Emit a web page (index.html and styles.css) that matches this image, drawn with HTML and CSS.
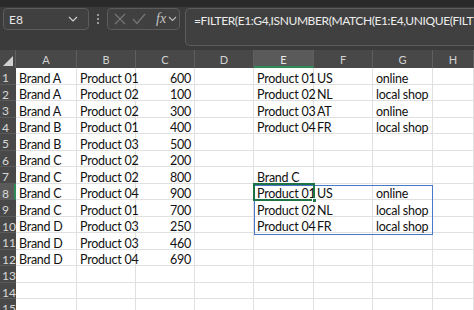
FILE: index.html
```html
<!DOCTYPE html>
<html>
<head>
<meta charset="utf-8">
<link rel="stylesheet" href="styles.css">
</head>
<body>
<div class="app">
  <div class="topstrip"></div>
  <div class="toolbar">
    <div class="namebox">
      <span class="nb-text">E8</span>
      <svg class="chev" width="10" height="6" viewBox="0 0 10 6"><path d="M1 1 L5 5 L9 1" fill="none" stroke="#cfcfcf" stroke-width="1.2"/></svg>
    </div>
    <div class="dots"><i></i><i></i><i></i></div>
    <div class="fxbox">
      <svg class="ico" width="12" height="12" viewBox="0 0 12 12"><path d="M1 1 L11 11 M11 1 L1 11" stroke="#767676" stroke-width="1.2"/></svg>
      <svg class="ico" width="14" height="12" viewBox="0 0 14 12"><path d="M1 6 L5 10.5 L13 1" fill="none" stroke="#767676" stroke-width="1.2"/></svg>
      <span class="fx">fx</span>
      <svg class="chev small" width="9" height="6" viewBox="0 0 9 6"><path d="M1 1 L4.5 4.5 L8 1" fill="none" stroke="#bdbdbd" stroke-width="1.1"/></svg>
    </div>
    <div class="formula">=FILTER(E1:G4,ISNUMBER(MATCH(E1:E4,UNIQUE(FILTER(A1:A12,B1:B12=E1:E4)),0)))</div>
  </div>
  <div class="sheet">
    <div class="corner"><span class="tri"></span></div>
    <div class="ch">A</div><div class="ch">B</div><div class="ch">C</div><div class="ch">D</div><div class="ch sel">E</div><div class="ch">F</div><div class="ch">G</div><div class="ch">H</div>

    <div class="rh">1</div><div class="c">Brand A</div><div class="c">Product 01</div><div class="c n">600</div><div class="c"></div><div class="c">Product 01</div><div class="c">US</div><div class="c">online</div><div class="c"></div>
    <div class="rh">2</div><div class="c">Brand A</div><div class="c">Product 02</div><div class="c n">100</div><div class="c"></div><div class="c">Product 02</div><div class="c">NL</div><div class="c">local shop</div><div class="c"></div>
    <div class="rh">3</div><div class="c">Brand A</div><div class="c">Product 02</div><div class="c n">300</div><div class="c"></div><div class="c">Product 03</div><div class="c">AT</div><div class="c">online</div><div class="c"></div>
    <div class="rh">4</div><div class="c">Brand B</div><div class="c">Product 01</div><div class="c n">400</div><div class="c"></div><div class="c">Product 04</div><div class="c">FR</div><div class="c">local shop</div><div class="c"></div>
    <div class="rh">5</div><div class="c">Brand B</div><div class="c">Product 03</div><div class="c n">500</div><div class="c"></div><div class="c"></div><div class="c"></div><div class="c"></div><div class="c"></div>
    <div class="rh">6</div><div class="c">Brand C</div><div class="c">Product 02</div><div class="c n">200</div><div class="c"></div><div class="c"></div><div class="c"></div><div class="c"></div><div class="c"></div>
    <div class="rh">7</div><div class="c">Brand C</div><div class="c">Product 02</div><div class="c n">800</div><div class="c"></div><div class="c">Brand C</div><div class="c"></div><div class="c"></div><div class="c"></div>
    <div class="rh sel">8</div><div class="c">Brand C</div><div class="c">Product 04</div><div class="c n">900</div><div class="c"></div><div class="c active">Product 01<span class="handle"></span></div><div class="c">US</div><div class="c">online</div><div class="c"></div>
    <div class="rh">9</div><div class="c">Brand C</div><div class="c">Product 01</div><div class="c n">700</div><div class="c"></div><div class="c">Product 02</div><div class="c">NL</div><div class="c">local shop</div><div class="c"></div>
    <div class="rh">10</div><div class="c">Brand D</div><div class="c">Product 03</div><div class="c n">250</div><div class="c"></div><div class="c">Product 04</div><div class="c">FR</div><div class="c">local shop</div><div class="c"></div>
    <div class="rh">11</div><div class="c">Brand D</div><div class="c">Product 03</div><div class="c n">460</div><div class="c"></div><div class="c"></div><div class="c"></div><div class="c"></div><div class="c"></div>
    <div class="rh">12</div><div class="c">Brand D</div><div class="c">Product 04</div><div class="c n">690</div><div class="c"></div><div class="c"></div><div class="c"></div><div class="c"></div><div class="c"></div>
    <div class="rh">13</div><div class="c"></div><div class="c"></div><div class="c"></div><div class="c"></div><div class="c"></div><div class="c"></div><div class="c"></div><div class="c"></div>
    <div class="rh">14</div><div class="c"></div><div class="c"></div><div class="c"></div><div class="c"></div><div class="c"></div><div class="c"></div><div class="c"></div><div class="c"></div>
    <div class="rh">15</div><div class="c"></div><div class="c"></div><div class="c"></div><div class="c"></div><div class="c"></div><div class="c"></div><div class="c"></div><div class="c"></div>

    <div class="spill"></div>
  </div>
</div>
</body>
</html>
```

FILE: styles.css
```css
* { box-sizing: border-box; }
html, body { margin: 0; padding: 0; }
body {
  width: 474px;
  height: 310px;
  overflow: hidden;
  background: #3a3a3a;
  font-family: Lato, "Liberation Sans", sans-serif;
}
.app { width: 474px; height: 310px; overflow: hidden; }
.topstrip { height: 7px; background: #2a2a2a; }
.toolbar {
  height: 43px;
  display: flex;
  align-items: flex-start;
  padding-top: 1px;
  background: #3b3b3b;
}
.namebox {
  margin-left: 3px;
  width: 86px;
  height: 22px;
  border: 1px solid #5c5c5c;
  border-radius: 4px;
  background: #404040;
  display: flex;
  align-items: center;
  justify-content: space-between;
  padding: 0 10px 0 5px;
}
.nb-text { color: #e8e8e8; font-size: 12px; }
.dots {
  width: 18px;
  height: 22px;
  display: flex;
  flex-direction: column;
  align-items: center;
  justify-content: center;
  gap: 2px;
}
.dots i { display: block; width: 2px; height: 2px; background: #bdbdbd; border-radius: 1px; }
.fxbox {
  width: 73px;
  height: 22px;
  border: 1px solid #5c5c5c;
  border-radius: 4px;
  background: #404040;
  display: flex;
  align-items: center;
  padding-left: 6px;
  gap: 6px;
}
.fx {
  font-family: "Liberation Serif", serif;
  font-style: italic;
  font-size: 14px;
  color: #c4c4c4;
  margin-left: 4px;
}
.chev.small { margin-left: -4px; }
.formula {
  margin-left: 5px;
  flex: 1;
  height: 38px;
  border: 1px solid #5c5c5c;
  border-right: none;
  border-radius: 5px 0 0 5px;
  background: #404040;
  color: #ececec;
  font-size: 12px;
  padding: 4px 0 0 8px;
  white-space: nowrap;
  overflow: hidden;
  letter-spacing: -0.4px;
}
.sheet {
  position: relative;
  display: grid;
  grid-template-columns: 16px 61px 59px 59px 59px 60px 59px 60px 41px;
  grid-template-rows: 18px 17px 16px 17px 16px 17px 16px 17px 16px 17px 16px 17px 16px 17px 16px 17px;
  background: #ffffff;
  font-size: 12.5px;
  letter-spacing: -0.25px;
  color: #111;
}
.corner {
  background: #484848;
  border-right: 1px solid #5e5e5e;
  position: relative;
}
.tri {
  position: absolute;
  right: 2px;
  bottom: 2px;
  width: 0; height: 0;
  border-left: 10px solid transparent;
  border-bottom: 10px solid #d0d0d0;
}
.ch {
  background: #484848;
  color: #d2d2d2;
  font-size: 11px;
  letter-spacing: 0;
  display: flex;
  align-items: center;
  justify-content: center;
  border-right: 1px solid #5e5e5e;
  padding-top: 1px;
}
.ch.sel { background: #5a5a5a; border-bottom: 2px solid #2e8b57; color: #e8e8e8; padding-top: 3px; }
.rh {
  background: #484848;
  color: #d8d8d8;
  font-size: 12px;
  letter-spacing: 0;
  display: flex;
  align-items: center;
  padding: 3px 0 0 2px;
  border-bottom: 1px solid #5a5a5a;
}
.rh.sel { background: #5a5a5a; border-right: 2px solid #2e8b57; }
.c {
  border-right: 1px solid #e0e0e0;
  border-bottom: 1px solid #e0e0e0;
  padding: 4px 0 0 3px;
  display: flex;
  align-items: center;
  white-space: nowrap;
  overflow: visible;
  position: relative;
}
.c.n { justify-content: flex-end; padding-right: 3px; }
.c.active { outline: 2px solid #1f7244; outline-offset: -1px; z-index: 2; }
.handle {
  position: absolute;
  right: -4px;
  bottom: -4px;
  width: 5px;
  height: 5px;
  background: #1f7244;
  border: 1px solid #fff;
}
.spill {
  position: absolute;
  left: 254px;
  top: 135px;
  width: 179px;
  height: 50px;
  border: 1px solid #4a78c8;
  pointer-events: none;
  z-index: 1;
}
```
